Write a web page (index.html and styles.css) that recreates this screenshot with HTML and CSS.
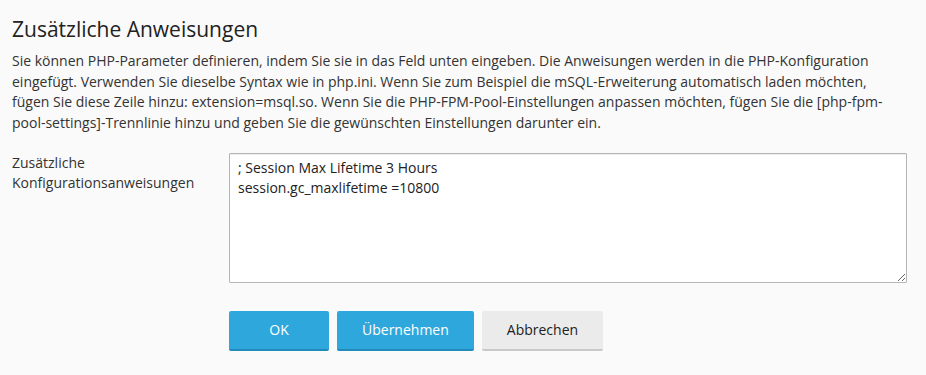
FILE: index.html
```html
<!DOCTYPE html>
<html lang="de">
<head>
<meta charset="utf-8">
<title>Zusätzliche Anweisungen</title>
<link rel="stylesheet" href="styles.css">
</head>
<body>
<main class="page">
  <h1 class="title">Zusätzliche Anweisungen</h1>
  <p class="hint">Sie können PHP-Parameter definieren, indem Sie sie in das Feld unten eingeben. Die Anweisungen werden in die PHP-Konfiguration eingefügt. Verwenden Sie dieselbe Syntax wie in php.ini. Wenn Sie zum Beispiel die mSQL-Erweiterung automatisch laden möchten, fügen Sie diese Zeile hinzu: extension=msql.so. Wenn Sie die PHP-FPM-Pool-Einstellungen anpassen möchten, fügen Sie die [php-fpm-pool-settings]-Trennlinie hinzu und geben Sie die gewünschten Einstellungen darunter ein.</p>
  <form class="form">
    <div class="row">
      <label class="label" for="directives">Zusätzliche Konfigurationsanweisungen</label>
      <textarea id="directives" class="field">; Session Max Lifetime 3 Hours
session.gc_maxlifetime =10800</textarea>
    </div>
    <div class="actions">
      <button type="button" class="btn btn-primary btn-ok">OK</button>
      <button type="button" class="btn btn-primary">Übernehmen</button>
      <button type="button" class="btn btn-default">Abbrechen</button>
    </div>
  </form>
</main>
</body>
</html>
```
FILE: styles.css
```css
html, body {
  margin: 0;
  padding: 0;
  background: #fafafa;
}
body {
  font-family: "Open Sans", "Liberation Sans", sans-serif;
  font-size: 14px;
  color: #333;
}
.page {
  width: 895px;
  padding: 17px 0 0 12px;
}
.title {
  margin: 0;
  font-size: 21px;
  line-height: 24px;
  font-weight: 400;
  color: #222;
}
.hint {
  margin: 10px 0 0 0;
  line-height: 20.67px;
  color: #333;
}
.form {
  margin-top: 19px;
}
.row {
  display: grid;
  grid-template-columns: 217px 678px;
  align-items: start;
}
.label {
  line-height: 20.67px;
  color: #333;
}
.field {
  box-sizing: border-box;
  width: 678px;
  height: 130px;
  margin: 0;
  padding: 4px 8px;
  border: 1px solid #b5b5b5;
  border-radius: 1px;
  background: #fff;
  box-shadow: inset 0 1px 1px rgba(0, 0, 0, 0.08);
  font-family: "Open Sans", "Liberation Sans", sans-serif;
  font-size: 14px;
  line-height: 20px;
  color: #222;
  resize: both;
  outline: none;
}
.actions {
  display: flex;
  gap: 8px;
  margin-top: 28px;
  padding-left: 217px;
}
.btn {
  box-sizing: border-box;
  height: 40px;
  padding: 0 25px;
  border: 0;
  border-bottom: 2px solid transparent;
  border-radius: 2px;
  font-family: "Open Sans", "Liberation Sans", sans-serif;
  font-size: 14px;
  line-height: 20px;
  font-weight: 400;
  cursor: pointer;
}
.btn-ok {
  min-width: 100px;
}
.btn-primary {
  background: #2ea8dc;
  border-bottom-color: #2289bb;
  color: #fff;
}
.btn-default {
  background: #ebebeb;
  border-bottom-color: #c9c9c9;
  color: #222;
}
```
